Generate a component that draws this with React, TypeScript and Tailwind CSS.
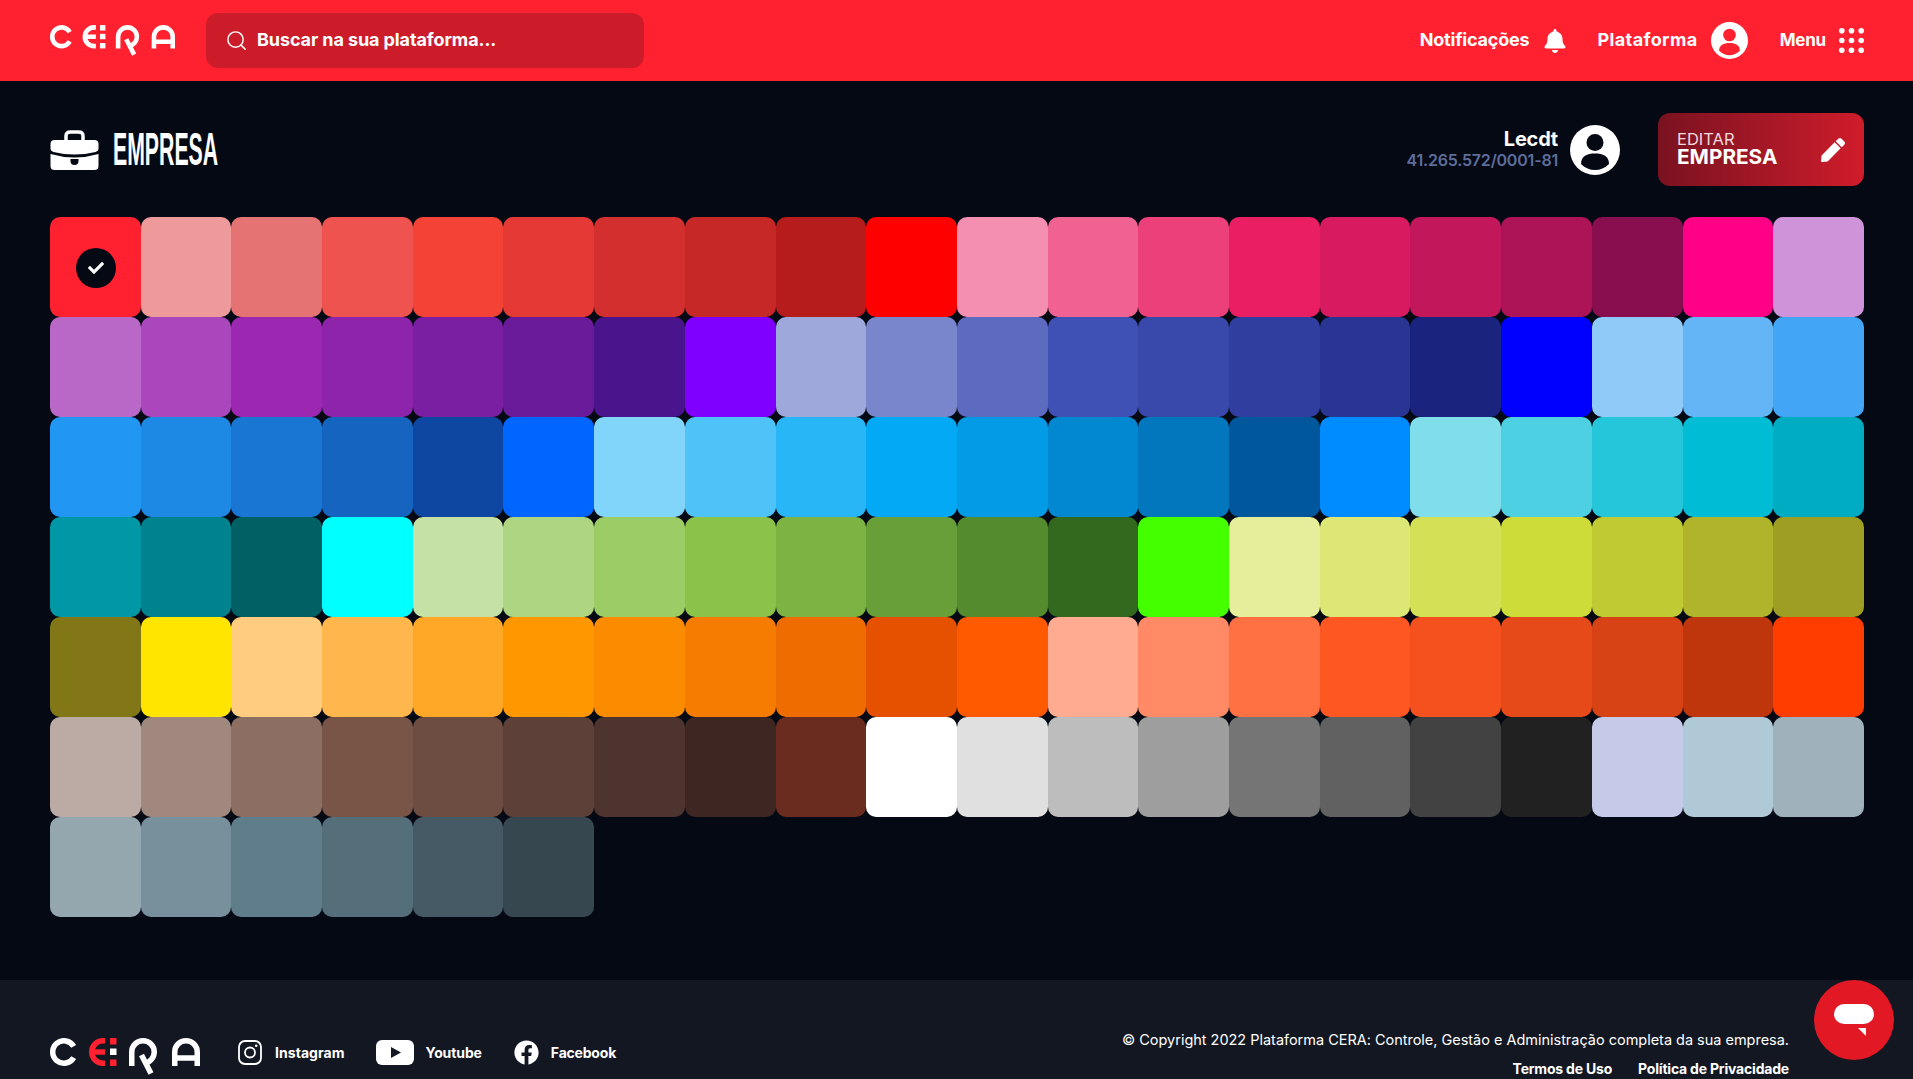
import React from 'react'
import { Search } from 'lucide-react'
import { FaBell, FaCheck, FaFacebook, FaPen } from 'react-icons/fa'

const swatches = [
  '#ff212f', '#ef9a9a', '#e57373', '#ef5350', '#f44336', '#e53935', '#d32f2f', '#c62828', '#b71c1c', '#ff0000',
  '#f48fb1', '#f06292', '#ec407a', '#e91e63', '#d81b60', '#c2185b', '#ad1457', '#880e4f', '#ff0087', '#ce93d8',
  '#ba68c8', '#ab47bc', '#9c27b0', '#8e24aa', '#7b1fa2', '#6a1b9a', '#4a148c', '#7f00ff', '#9fa8da', '#7986cb',
  '#5c6bc0', '#3f51b5', '#3949ab', '#303f9f', '#283593', '#1a237e', '#0000ff', '#90caf9', '#64b5f6', '#42a5f5',
  '#2196f3', '#1e88e5', '#1976d2', '#1565c0', '#0d47a1', '#0066ff', '#81d4fa', '#4fc3f7', '#29b6f6', '#03a9f4',
  '#039be5', '#0288d1', '#0277bd', '#01579b', '#008cff', '#80deea', '#4dd0e1', '#26c6da', '#00bcd4', '#00acc1',
  '#0097a7', '#00838f', '#006064', '#00ffff', '#c5e1a5', '#aed581', '#9ccc65', '#8bc34a', '#7cb342', '#689f38',
  '#558b2f', '#33691e', '#44ff00', '#e6ee9c', '#dce775', '#d4e157', '#cddc39', '#c0ca33', '#afb42b', '#9e9d24',
  '#827717', '#ffe500', '#ffcc80', '#ffb74d', '#ffa726', '#ff9800', '#fb8c00', '#f57c00', '#ef6c00', '#e65100',
  '#ff5a00', '#ffab91', '#ff8a65', '#ff7043', '#ff5722', '#f4511e', '#e64a19', '#d84315', '#bf360c', '#ff3d00',
  '#bcaaa4', '#a1887f', '#8d6e63', '#795548', '#6d4c41', '#5d4037', '#4e342e', '#3e2723', '#6b2c20', '#ffffff',
  '#e0e0e0', '#bdbdbd', '#9e9e9e', '#757575', '#616161', '#424242', '#212121', '#c5cae9', '#b0c9d6', '#9fb2bb',
  '#94a7af', '#78909c', '#607d8b', '#546e7a', '#455a64', '#37474f',
]

function Logo({ accent, className }: { accent: string; className: string }) {
  return (
    <svg viewBox="0 0 150 37" className={className} fill="none" stroke="#fff" strokeWidth="5.5">
      <path d="M23.7 8.4 A11.25 11.25 0 1 0 23.7 19.6" />
      <path d="M55 2.75 H53 A11.25 11.25 0 0 0 53 25.25 H55 M43 14 H55" stroke={accent} />
      <rect x="60" y="0" width="6.5" height="6.5" fill={accent} stroke="none" />
      <rect x="60" y="10.5" width="6.5" height="6.5" fill="#fff" stroke="none" />
      <rect x="60" y="21.5" width="6.5" height="6.5" fill={accent} stroke="none" />
      <path d="M81.75 28 V14 A11.25 11.25 0 0 1 104.25 14 A11.25 11.25 0 0 1 95 25" />
      <path d="M91.5 17 L101 35.5" />
      <path d="M124.75 28 V14 A11.25 11.25 0 0 1 147.25 14 V28 M124.75 20 H147.25" />
    </svg>
  )
}

function Avatar({ tint, className }: { tint: string; className: string }) {
  return (
    <svg viewBox="0 0 50 50" className={className}>
      <circle cx="25" cy="25" r="25" fill="#fff" />
      <circle cx="25" cy="17.5" r="8.5" fill={tint} />
      <path d="M11 39 C11 31 17 28.5 25 28.5 C33 28.5 39 31 39 39 C35 43 30 45 25 45 C20 45 15 43 11 39 Z" fill={tint} />
    </svg>
  )
}

function Briefcase() {
  return (
    <svg viewBox="0 0 48 40" className="h-[40px] w-[49px]" fill="#fff">
      <path d="M15.5 10 V6 Q15.5 2 20 2 H28 Q32.5 2 32.5 6 V10" fill="none" stroke="#fff" strokeWidth="3.5" />
      <path d="M4 10 H44 Q48 10 48 14 V19 Q48 21 45 22 Q24 27 3 22 Q0 21 0 19 V14 Q0 10 4 10 Z" />
      <path d="M0 24 Q24 31 48 24 V36 Q48 40 44 40 H4 Q0 40 0 36 Z" />
      <path d="M20 29 H28 V31 Q28 35 24 35 Q20 35 20 31 Z" fill="#050914" />
    </svg>
  )
}

function MenuDots() {
  const points = [2.8, 12.5, 22.2]
  return (
    <svg viewBox="0 0 25 25" className="h-[25px] w-[25px]" fill="#fff">
      {points.map((y) => points.map((x) => <circle key={`${x}-${y}`} cx={x} cy={y} r="2.8" />))}
    </svg>
  )
}

function Instagram() {
  return (
    <svg viewBox="0 0 24 25" className="h-[25px] w-[24px]" fill="none" stroke="#fff" strokeWidth="1.8">
      <rect x="1" y="1" width="22" height="23" rx="6" />
      <circle cx="12" cy="12.5" r="5" />
      <circle cx="18.2" cy="5.8" r="1.3" fill="#fff" stroke="none" />
    </svg>
  )
}

function Youtube() {
  return (
    <svg viewBox="0 0 38 25" className="h-[25px] w-[38px]">
      <rect width="38" height="25" rx="6" fill="#fff" />
      <path d="M15 7 L25 12.5 L15 18 Z" fill="#131722" />
    </svg>
  )
}

export default function App() {
  return (
    <div className="relative flex h-screen flex-col overflow-hidden bg-[#050914] font-['Inter','Liberation_Sans',sans-serif] text-white">
      <header className="flex h-[81px] shrink-0 items-center bg-[#ff212f] pl-[50px] pr-[49px]">
        <Logo accent="#fff" className="h-[31px] w-[125px] shrink-0" />
        <div className="ml-[31px] flex h-[55px] w-[438px] items-center gap-[9px] rounded-[12px] bg-[#cc1c2a] pl-[19px]">
          <Search className="h-[23px] w-[23px]" strokeWidth={1.5} />
          <span className="mb-[2px] text-[18px] font-bold leading-[20px] tracking-[-0.1px]">Buscar na sua plataforma...</span>
        </div>
        <div className="ml-auto flex items-center">
          <span className="mb-[2px] text-[18px] font-bold leading-[20px] tracking-[-0.2px]">Notificações</span>
          <FaBell className="ml-[15px] h-[24px] w-[22px]" />
          <span className="mb-[2px] ml-[31px] text-[18px] font-bold leading-[20px] tracking-[0.4px]">Plataforma</span>
          <span className="ml-[13px]">
            <Avatar tint="#ff212f" className="block h-[37px] w-[37px]" />
          </span>
          <span className="mb-[2px] ml-[32px] text-[17px] font-bold leading-[20px] tracking-[-0.2px]">Menu</span>
          <span className="ml-[13px]">
            <MenuDots />
          </span>
        </div>
      </header>

      <section className="mb-[31px] mt-[32px] flex h-[73px] shrink-0 items-center justify-between pl-[50px] pr-[49px]">
        <div className="flex items-center gap-[14px]">
          <Briefcase />
          <h1 className="mb-[2px] h-[54px] w-[105px] whitespace-nowrap font-['Liberation_Sans',sans-serif] text-[47px] font-bold leading-[54px]">
            <span className="inline-block origin-left scale-x-[0.452]">EMPRESA</span>
          </h1>
        </div>
        <div className="flex items-center">
          <div className="mb-[2px] flex flex-col items-end">
            <span className="text-[20px] font-bold leading-[23px] tracking-[-0.2px]">Lecdt</span>
            <span className="text-[16px] font-semibold leading-[19px] tracking-[-0.2px] text-[#5e6d9b]">41.265.572/0001-81</span>
          </div>
          <span className="ml-[12px]">
            <Avatar tint="#050914" className="block h-[50px] w-[50px]" />
          </span>
          <button className="ml-[38px] flex h-[73px] w-[206px] items-center justify-between rounded-[12px] bg-gradient-to-r from-[#7a1220] to-[#d01c2b] pl-[19px] pr-[19px] text-left">
            <span className="mb-[3px] flex flex-col">
              <span className="text-[16.5px] leading-[17px] text-[#f1d9dc]">EDITAR</span>
              <span className="text-[20.75px] font-bold leading-[18px]">EMPRESA</span>
            </span>
            <FaPen className="h-[24px] w-[24px]" />
          </button>
        </div>
      </section>

      <main className="grid shrink-0 grid-cols-20 pl-[50px] pr-[49px]">
        {swatches.map((color, idx) => (
          <div
            key={`${color}-${idx}`}
            className="flex h-[100px] items-center justify-center rounded-[10px] pl-[1px] pt-[2px]"
            style={{ background: color }}
          >
            {idx === 0 && (
              <span className="flex h-[40px] w-[40px] items-center justify-center rounded-full bg-[#050914]">
                <FaCheck className="h-[16px] w-[16px]" />
              </span>
            )}
          </div>
        ))}
      </main>

      <footer className="mt-[63px] flex h-[99px] shrink-0 items-start justify-between bg-[#131722] pl-[50px] pr-[124px]">
        <div className="mt-[58px] flex items-start">
          <Logo accent="#ff212f" className="h-[37px] w-[150px] shrink-0" />
          <div className="ml-[38px] mt-[2px] flex items-center gap-[13px]">
            <Instagram />
            <span className="text-[14px] font-bold leading-[18px] tracking-[0.05px]">Instagram</span>
          </div>
          <div className="ml-[31px] mt-[2px] flex items-center gap-[12px]">
            <Youtube />
            <span className="text-[14px] font-bold leading-[18px] tracking-[-0.1px]">Youtube</span>
          </div>
          <div className="ml-[32px] mt-[2px] flex items-center gap-[12px]">
            <FaFacebook className="h-[25px] w-[25px]" />
            <span className="text-[14px] font-bold leading-[18px] tracking-[-0.2px]">Facebook</span>
          </div>
        </div>
        <div className="mt-[50px] flex flex-col items-end">
          <p className="text-[14.5px] leading-[20px] tracking-[-0.02px]">
            © Copyright 2022 Plataforma CERA: Controle, Gestão e Administração completa da sua empresa.
          </p>
          <div className="mt-[9px] flex gap-[26px] text-[14px] font-bold leading-[20px] tracking-[-0.2px]">
            <span>Termos de Uso</span>
            <span>Política de Privacidade</span>
          </div>
        </div>
      </footer>

      <div className="absolute left-[1814px] top-[980px] flex h-[80px] w-[80px] items-center justify-center rounded-full bg-[#e21824]">
        <svg viewBox="0 0 40 32" className="h-[32px] w-[40px]" fill="#fff">
          <rect width="40" height="20" rx="10" />
          <path d="M24 24 H32 V32 Z" />
        </svg>
      </div>
    </div>
  )
}
